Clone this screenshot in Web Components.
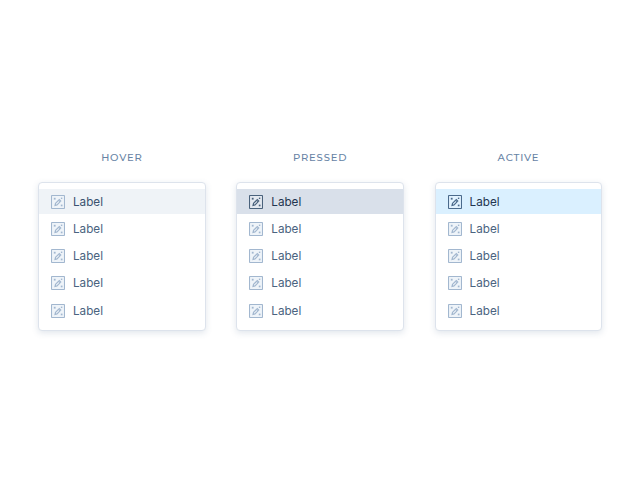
<!DOCTYPE html>
<html>
<head>
<meta charset="utf-8">
<title>Menu states</title>
<style>
  html, body { margin: 0; background: #fff; }
  body { font-family: Inter, "Liberation Sans", sans-serif; }
</style>
</head>
<body>
<state-board>
  <state-column heading="HOVER" state="hover"></state-column>
  <state-column heading="PRESSED" state="pressed"></state-column>
  <state-column heading="ACTIVE" state="active"></state-column>
</state-board>

<script>
class StateBoard extends HTMLElement {
  constructor() {
    super();
    this.attachShadow({ mode: 'open' });
    this.shadowRoot.innerHTML = `
      <style>
        :host { display: flex; gap: 30.5px; padding: 151px 0 0 38px; box-sizing: border-box; width: 640px; height: 480px; }
      </style>
      <slot></slot>
    `;
  }
}

class ItemIcon extends HTMLElement {
  constructor() {
    super();
    this.attachShadow({ mode: 'open' });
    this.shadowRoot.innerHTML = `
      <style>
        :host { display: block; width: 14px; height: 14px; color: var(--icon-color, #a2b7cf); }
        svg { display: block; }
      </style>
      <svg width="14" height="14" viewBox="0 0 14 14" fill="none" stroke="currentColor">
        <rect x="0.5" y="0.5" width="13" height="13" rx="0.8" fill="var(--icon-fill, #eff4f9)" stroke-width="1.1"/>
        <path d="M4 10.4 L4.5 8.4 L8.3 4.6 L9.8 6.1 L6 9.9 Z" stroke-width="1.1"/>
        <path d="M7.4 5.5 L8.9 7" stroke-width="0.9"/>
        <g fill="currentColor" stroke="none">
          <rect x="2.8" y="2.8" width="1.8" height="1.8"/>
          <rect x="9.9" y="2.6" width="1.4" height="1.4"/>
          <rect x="9.8" y="9.6" width="1.7" height="1.7"/>
        </g>
      </svg>
    `;
  }
}

class MenuRow extends HTMLElement {
  constructor() {
    super();
    this.attachShadow({ mode: 'open' });
    this.shadowRoot.innerHTML = `
      <style>
        :host {
          display: flex; align-items: center; gap: 8px;
          height: 25px; padding-left: 12px;
          font-size: 11.7px; color: #4a6380;
        }
        :host([state="hover"]) { background: #eff3f7; color: #3a5270; }
        :host([state="pressed"]) { background: #d9e0ea; color: #1f3550; --icon-color: #4a627c; --icon-fill: #e4e9f0; }
        :host([state="active"]) { background: #daf0ff; color: #1f3550; --icon-color: #4a6a8c; --icon-fill: #e2f3ff; }
      </style>
      <item-icon></item-icon>
      <span><slot></slot></span>
    `;
  }
}

class StateColumn extends HTMLElement {
  constructor() {
    super();
    this.attachShadow({ mode: 'open' });
    const state = this.getAttribute('state');
    const rows = [state, '', '', '', ''].map((s) => `<menu-row state="${s}">Label</menu-row>`).join('');
    this.shadowRoot.innerHTML = `
      <style>
        :host { display: block; width: 167.8px; }
        .heading {
          height: 13px; line-height: 13px; margin-bottom: 18px;
          text-align: center; font-family: Montserrat, "Open Sans", Inter, sans-serif; font-size: 10px; font-weight: 500;
          letter-spacing: 0.85px; color: #6783a5;
        }
        .card {
          box-sizing: border-box; height: 149px; padding: 6px 0 0;
          display: flex; flex-direction: column; gap: 2.3px;
          background: #fff; border: 1px solid #dde3ec; border-radius: 4px;
          box-shadow: 0 2px 6px rgba(80, 105, 140, 0.17);
          overflow: hidden;
        }
      </style>
      <div class="heading">${this.getAttribute('heading')}</div>
      <div class="card">${rows}</div>
    `;
  }
}

customElements.define('state-board', StateBoard);
customElements.define('item-icon', ItemIcon);
customElements.define('menu-row', MenuRow);
customElements.define('state-column', StateColumn);
</script>
</body>
</html>
